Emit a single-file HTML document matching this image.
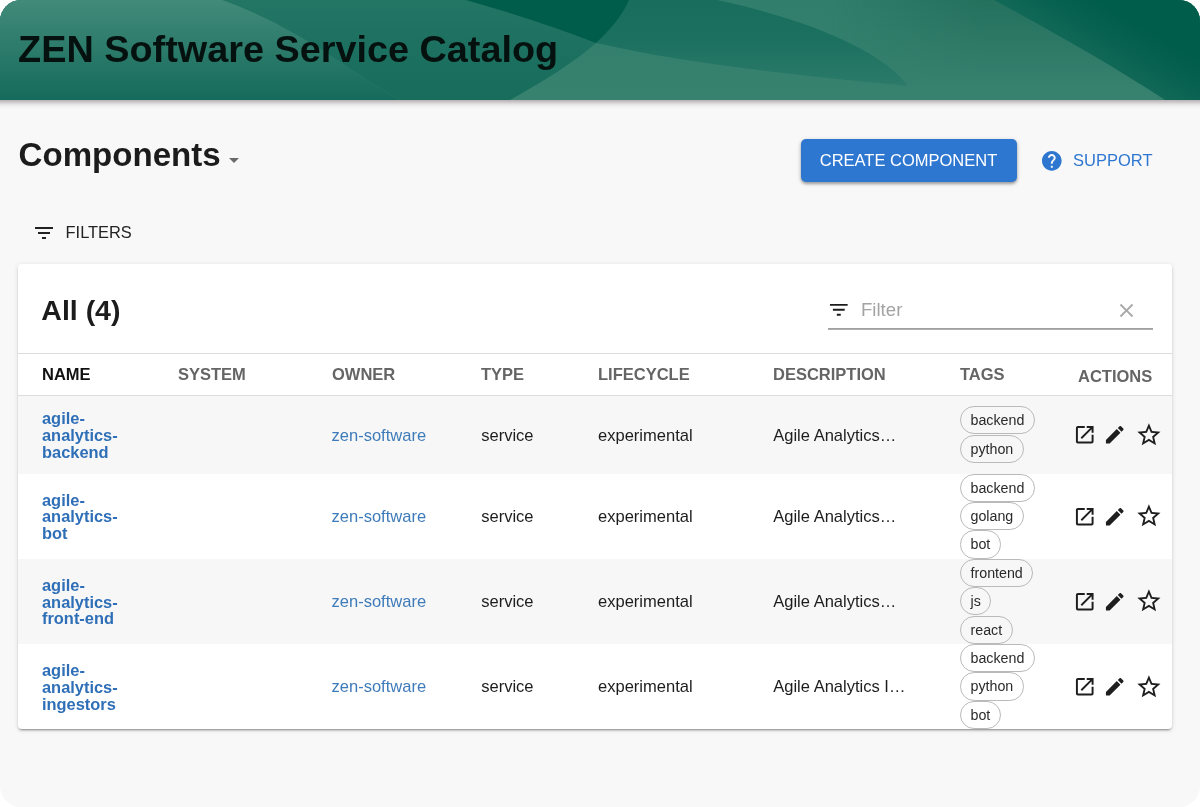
<!DOCTYPE html>
<html lang="en">
<head>
<meta charset="utf-8">
<title>ZEN Software Service Catalog</title>
<style>
*{box-sizing:border-box;margin:0;padding:0}
html,body{width:1200px;height:807px;overflow:hidden;background:#fff}
body{font-family:"Liberation Sans",Arial,sans-serif;color:#1d1d1d}
#app{will-change:transform;position:relative;width:1200px;height:807px;background:#f8f8f8;border-radius:21px;overflow:hidden}
header{position:absolute;left:0;top:0;width:1200px;height:100px;background:#167361}
.hshadow{position:absolute;left:-20px;top:0;width:1240px;height:100px;box-shadow:0 2px 6px rgba(40,20,30,.42)}
header svg{position:absolute;left:0;top:0}
header h1{position:absolute;left:18.1px;top:26.6px;font-size:37.82px;line-height:44px;font-weight:700;color:#05110f;white-space:nowrap}
h2{position:absolute;left:18.6px;top:135px;font-size:33.1px;line-height:40px;font-weight:700;color:#1c1c1c;white-space:nowrap}
.caret{position:absolute;left:228.8px;top:158.2px;width:0;height:0;border-left:5.9px solid transparent;border-right:5.9px solid transparent;border-top:5.9px solid #6a6a6a}
.btn{position:absolute;left:801px;top:139px;width:216px;height:43px;border-radius:5px;background:#2e77d0;color:#fff;font-size:16.5px;line-height:43px;text-align:center;text-indent:-1px;box-shadow:0 2px 3px rgba(0,0,0,.3),0 1px 5px rgba(0,0,0,.15)}
.support{position:absolute;left:1073px;top:150px;font-size:16.5px;line-height:20px;color:#2e77d0}
.ic{position:absolute}
.filters{position:absolute;left:65.6px;top:222.4px;font-size:16.4px;line-height:20px;color:#222}
.card{position:absolute;left:18px;top:264px;width:1154px;height:465px;background:#fff;border-radius:4px;box-shadow:0 3px 1px -2px rgba(0,0,0,.2),0 2px 2px 0 rgba(0,0,0,.14),0 1px 5px 0 rgba(0,0,0,.12)}
.card h3{position:absolute;left:23.3px;top:28px;font-size:28.5px;line-height:36px;font-weight:700;color:#1c1c1c}
.finput{position:absolute;left:810px;top:30px;width:325px;height:36px}
.finput span{position:absolute;left:33px;top:5px;font-size:18.6px;line-height:22px;color:#a3a3a3}
.row{position:absolute;left:0;width:1154px}
.thead{top:89px;height:43px;border-top:1px solid #dcdcdc;border-bottom:1px solid #dcdcdc;font-weight:700;color:#656565}
.c{position:absolute;white-space:nowrap;font-size:16.55px;line-height:20px}
.thead .c{font-size:16.5px;top:10.3px}
.g{background:#f7f7f7}
a{color:#3e7bba;text-decoration:none}
.name{font-weight:700;font-size:16.42px;line-height:16.67px;color:#2f6fb7;white-space:normal}
.chip{position:absolute;left:942px;height:28.2px;border:1px solid #bababa;border-radius:14.2px;font-size:14.25px;line-height:26.6px;padding:0 9.5px;color:#2a2a2a}
.act{position:absolute}
</style>
</head>
<body>
<div id="app">
<div class="hshadow"></div>
<header>
<svg width="1200" height="100" viewBox="0 0 1200 100">
<defs>
<linearGradient id="lg" x1="0" y1="0" x2="0" y2="1"><stop offset="0" stop-color="#428a7a"/><stop offset="1" stop-color="#156b5b"/></linearGradient>
<linearGradient id="mg" x1="0" y1="0" x2="0" y2="1"><stop offset="0" stop-color="#237564"/><stop offset="1" stop-color="#176c5b"/></linearGradient>
<linearGradient id="ln" gradientUnits="userSpaceOnUse" x1="0" y1="0" x2="0" y2="100"><stop offset="0" stop-color="#196d5c"/><stop offset=".4" stop-color="#1c705f"/><stop offset=".75" stop-color="#287867"/><stop offset="1" stop-color="#33806e"/></linearGradient>
<linearGradient id="bg" x1="0" y1="0" x2="0" y2="1"><stop offset="0" stop-color="#317e6c"/><stop offset="1" stop-color="#37826f"/></linearGradient>
<linearGradient id="vg" x1="0" y1="0" x2="0" y2="1"><stop offset="0" stop-color="#08533f" stop-opacity=".3"/><stop offset=".85" stop-color="#08533f" stop-opacity="0"/></linearGradient>
<linearGradient id="mkg" gradientUnits="userSpaceOnUse" x1="830" y1="0" x2="980" y2="0"><stop offset="0" stop-color="#000"/><stop offset="1" stop-color="#fff"/></linearGradient>
<mask id="mk" maskUnits="userSpaceOnUse" x="820" y="0" width="380" height="100"><rect x="820" width="380" height="100" fill="url(#mkg)"/></mask>
<linearGradient id="dr" gradientUnits="userSpaceOnUse" x1="1080" y1="50" x2="1106" y2="6"><stop offset="0" stop-color="#116857"/><stop offset="1" stop-color="#005c4b"/></linearGradient>
</defs>
<rect width="1200" height="100" fill="url(#bg)"/>
<rect x="820" width="380" height="100" fill="url(#vg)" mask="url(#mk)"/>
<path d="M222 0C300 28 350 72 400 100H510C560 72 612 40 630 0Z" fill="url(#mg)"/>
<path d="M0 0H222C300 28 350 72 400 100H0Z" fill="url(#lg)"/>
<path d="M629 0C622 16 610 30 596 43C680 62 780 74 908 86C890 60 830 24 717 0Z" fill="url(#ln)"/>
<path d="M466 0C511 13 556 27 596 43C610 30 622 16 629 0Z" fill="#005c4b"/>
<path d="M994 0C1055 33 1115 67 1165 100H1200V0Z" fill="url(#dr)"/>
</svg>
<h1>ZEN Software Service Catalog</h1>
</header>
<h2>Components</h2>
<div class="caret"></div>
<div class="btn">CREATE COMPONENT</div>
<svg class="ic" style="left:1040.20px;top:148.50px" width="23.6" height="23.6" viewBox="0 0 24 24"><path fill="#2e77d0" d="M12 2C6.480 2 2 6.480 2 12s4.480 10 10 10 10-4.480 10-10S17.520 2 12 2zm1 17h-2v-2h2v2zm2.070-7.750l-.9.920C13.450 12.900 13 13.500 13 15h-2v-.5c0-1.100.450-2.100 1.170-2.830l1.240-1.260c.370-.360.590-.860.590-1.410 0-1.100-.9-2-2-2s-2 .9-2 2H8c0-2.210 1.790-4 4-4s4 1.790 4 4c0 .880-.360 1.680-.930 2.250z"/></svg>
<div class="support">SUPPORT</div>
<svg class="ic" style="left:32.00px;top:220.50px" width="24.0" height="24.0" viewBox="0 0 24 24"><path fill="#222" d="M10 18h4v-2h-4v2zM3 6v2h18V6H3zm3 7h12v-2H6v2z"/></svg>
<div class="filters">FILTERS</div>

<div class="card">
<h3>All (4)</h3>
<div class="finput">
<svg class="ic" style="left:-1.00px;top:4.30px" width="23.6" height="23.6" viewBox="0 0 24 24"><path fill="#1c1c1c" d="M10 18h4v-2h-4v2zM3 6v2h18V6H3zm3 7h12v-2H6v2z"/></svg>
<span>Filter</span>
<svg class="ic" style="left:287.20px;top:5.20px" width="23.0" height="23.0" viewBox="0 0 24 24"><path fill="#a8a8a8" d="M19 6.410L17.590 5 12 10.590 6.410 5 5 6.410 10.590 12 5 17.590 6.410 19 12 13.410 17.590 19 19 17.590 13.410 12z"/></svg>
<svg class="ic" style="left:0;top:33px" width="325" height="4" viewBox="0 0 325 4"><rect x="0" y="1.05" width="325" height="1.75" fill="#9c9c9c"/></svg>
</div>
<div class="row thead">
<div class="c" style="left:24px;color:#111">NAME</div>
<div class="c" style="left:160px">SYSTEM</div>
<div class="c" style="left:314px">OWNER</div>
<div class="c" style="left:463px">TYPE</div>
<div class="c" style="left:580px">LIFECYCLE</div>
<div class="c" style="left:755px">DESCRIPTION</div>
<div class="c" style="left:942px">TAGS</div>
<div class="c" style="left:1060px;top:11.5px">ACTIONS</div>
</div>

<div class="row g" style="top:132px;height:78px">
<a class="c name" style="left:24px;top:14.29px;width:110px">agile-<br>analytics-<br>backend</a>
<a class="c" style="left:313.5px;top:29.60px">zen-software</a>
<div class="c" style="left:463.2px;top:29.60px">service</div>
<div class="c" style="left:580px;top:29.60px">experimental</div>
<div class="c" style="left:755.2px;top:29.60px">Agile Analytics…</div>
<div class="chip" style="top:10.25px">backend</div>
<div class="chip" style="top:38.70px">python</div>
<svg class="act" style="left:1054.90px;top:27.45px" width="23.5" height="23.5" viewBox="0 0 24 24"><path fill="#1e1e1e" d="M19 19H5V5h7V3H5c-1.110 0-2 .9-2 2v14c0 1.100.890 2 2 2h14c1.100 0 2-.9 2-2v-7h-2v7zM14 3v2h3.590l-9.830 9.830 1.410 1.410L19 6.410V10h2V3h-7z"/></svg>
<svg class="act" style="left:1085.10px;top:27.35px" width="23.5" height="23.5" viewBox="0 0 24 24"><path fill="#1e1e1e" d="M3 17.250V21h3.750L17.810 9.940l-3.750-3.750L3 17.250zM20.710 7.040c.390-.390.390-1.020 0-1.410l-2.340-2.340c-.390-.390-1.020-.390-1.410 0l-1.830 1.830 3.750 3.750 1.830-1.830z"/></svg>
<svg class="act" style="left:1116.50px;top:24.60px" width="27.8" height="27.8" viewBox="0 0 24 24"><path fill="#1e1e1e" d="M22 9.240l-7.190-.620L12 2 9.190 8.630 2 9.240l5.460 4.730L5.820 21 12 17.270 18.180 21l-1.630-7.030L22 9.240zM12 15.400l-3.760 2.270 1-4.280-3.320-2.880 4.380-.380L12 6.100l1.710 4.040 4.380.380-3.320 2.880 1 4.280L12 15.400z"/></svg>
</div>
<div class="row" style="top:210px;height:85px">
<a class="c name" style="left:24px;top:17.80px;width:110px">agile-<br>analytics-<br>bot</a>
<a class="c" style="left:313.5px;top:33.10px">zen-software</a>
<div class="c" style="left:463.2px;top:33.10px">service</div>
<div class="c" style="left:580px;top:33.10px">experimental</div>
<div class="c" style="left:755.2px;top:33.10px">Agile Analytics…</div>
<div class="chip" style="top:-0.47px">backend</div>
<div class="chip" style="top:27.98px">golang</div>
<div class="chip" style="top:56.43px">bot</div>
<svg class="act" style="left:1054.90px;top:30.95px" width="23.5" height="23.5" viewBox="0 0 24 24"><path fill="#1e1e1e" d="M19 19H5V5h7V3H5c-1.110 0-2 .9-2 2v14c0 1.100.890 2 2 2h14c1.100 0 2-.9 2-2v-7h-2v7zM14 3v2h3.590l-9.830 9.830 1.410 1.410L19 6.410V10h2V3h-7z"/></svg>
<svg class="act" style="left:1085.10px;top:30.85px" width="23.5" height="23.5" viewBox="0 0 24 24"><path fill="#1e1e1e" d="M3 17.250V21h3.750L17.810 9.940l-3.750-3.750L3 17.250zM20.710 7.040c.390-.390.390-1.020 0-1.410l-2.340-2.340c-.390-.390-1.020-.390-1.410 0l-1.830 1.830 3.750 3.750 1.830-1.830z"/></svg>
<svg class="act" style="left:1116.50px;top:28.10px" width="27.8" height="27.8" viewBox="0 0 24 24"><path fill="#1e1e1e" d="M22 9.240l-7.190-.620L12 2 9.190 8.630 2 9.240l5.460 4.730L5.820 21 12 17.270 18.180 21l-1.630-7.030L22 9.240zM12 15.400l-3.760 2.270 1-4.280-3.320-2.880 4.380-.380L12 6.100l1.710 4.040 4.380.380-3.320 2.880 1 4.280L12 15.400z"/></svg>
</div>
<div class="row g" style="top:295px;height:85px">
<a class="c name" style="left:24px;top:18.00px;width:110px">agile-<br>analytics-<br>front-end</a>
<a class="c" style="left:313.5px;top:33.30px">zen-software</a>
<div class="c" style="left:463.2px;top:33.30px">service</div>
<div class="c" style="left:580px;top:33.30px">experimental</div>
<div class="c" style="left:755.2px;top:33.30px">Agile Analytics…</div>
<div class="chip" style="top:-0.27px">frontend</div>
<div class="chip" style="top:28.18px">js</div>
<div class="chip" style="top:56.63px">react</div>
<svg class="act" style="left:1054.90px;top:31.15px" width="23.5" height="23.5" viewBox="0 0 24 24"><path fill="#1e1e1e" d="M19 19H5V5h7V3H5c-1.110 0-2 .9-2 2v14c0 1.100.890 2 2 2h14c1.100 0 2-.9 2-2v-7h-2v7zM14 3v2h3.590l-9.830 9.830 1.410 1.410L19 6.410V10h2V3h-7z"/></svg>
<svg class="act" style="left:1085.10px;top:31.05px" width="23.5" height="23.5" viewBox="0 0 24 24"><path fill="#1e1e1e" d="M3 17.250V21h3.750L17.810 9.940l-3.750-3.750L3 17.250zM20.710 7.040c.390-.390.390-1.020 0-1.410l-2.340-2.340c-.390-.390-1.020-.390-1.410 0l-1.830 1.830 3.750 3.750 1.830-1.830z"/></svg>
<svg class="act" style="left:1116.50px;top:28.30px" width="27.8" height="27.8" viewBox="0 0 24 24"><path fill="#1e1e1e" d="M22 9.240l-7.190-.620L12 2 9.190 8.630 2 9.240l5.460 4.730L5.820 21 12 17.270 18.180 21l-1.630-7.030L22 9.240zM12 15.400l-3.760 2.270 1-4.280-3.320-2.880 4.380-.380L12 6.100l1.710 4.040 4.380.380-3.320 2.880 1 4.280L12 15.400z"/></svg>
</div>
<div class="row" style="top:380px;height:85px;border-radius:0 0 4px 4px">
<a class="c name" style="left:24px;top:18.19px;width:110px">agile-<br>analytics-<br>ingestors</a>
<a class="c" style="left:313.5px;top:32.90px">zen-software</a>
<div class="c" style="left:463.2px;top:32.90px">service</div>
<div class="c" style="left:580px;top:32.90px">experimental</div>
<div class="c" style="left:755.2px;top:32.90px">Agile Analytics I…</div>
<div class="chip" style="top:-0.07px">backend</div>
<div class="chip" style="top:28.38px">python</div>
<div class="chip" style="top:56.83px">bot</div>
<svg class="act" style="left:1054.90px;top:31.35px" width="23.5" height="23.5" viewBox="0 0 24 24"><path fill="#1e1e1e" d="M19 19H5V5h7V3H5c-1.110 0-2 .9-2 2v14c0 1.100.890 2 2 2h14c1.100 0 2-.9 2-2v-7h-2v7zM14 3v2h3.590l-9.830 9.830 1.410 1.410L19 6.410V10h2V3h-7z"/></svg>
<svg class="act" style="left:1085.10px;top:31.25px" width="23.5" height="23.5" viewBox="0 0 24 24"><path fill="#1e1e1e" d="M3 17.250V21h3.750L17.810 9.940l-3.750-3.750L3 17.250zM20.710 7.040c.390-.390.390-1.020 0-1.410l-2.340-2.340c-.390-.390-1.020-.390-1.410 0l-1.830 1.830 3.750 3.750 1.830-1.830z"/></svg>
<svg class="act" style="left:1116.50px;top:28.50px" width="27.8" height="27.8" viewBox="0 0 24 24"><path fill="#1e1e1e" d="M22 9.240l-7.190-.620L12 2 9.190 8.630 2 9.240l5.460 4.730L5.820 21 12 17.270 18.180 21l-1.630-7.030L22 9.240zM12 15.400l-3.760 2.270 1-4.280-3.320-2.880 4.380-.380L12 6.100l1.710 4.040 4.380.380-3.320 2.880 1 4.280L12 15.400z"/></svg>
</div>
</div>
</div>
</body>
</html>
